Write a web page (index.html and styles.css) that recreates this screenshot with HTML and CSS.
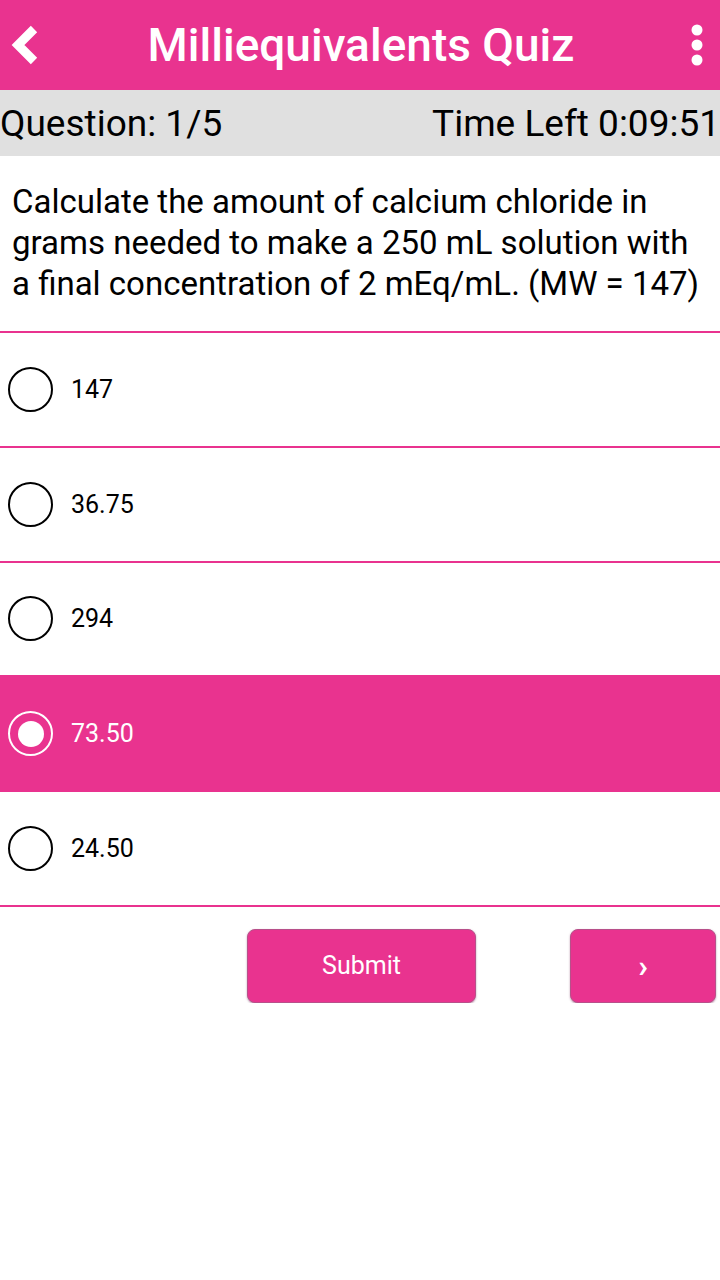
FILE: index.html
```html
<!DOCTYPE html>
<html lang="en-US">
<head>
  <title>Milliequivalents Quiz</title>
  <meta charset="utf-8">
  <link rel="stylesheet" href="styles.css">
</head>
<body>
  <header class="app-bar">
    <svg class="back" width="32" height="40" viewBox="0 0 32 40">
      <path d="M24 4 L8 20 L24 36" fill="none" stroke="#fff" stroke-width="9" stroke-linejoin="miter"/>
    </svg>
    <h1>Milliequivalents Quiz</h1>
    <svg class="menu" width="14" height="44" viewBox="0 0 14 44">
      <circle cx="7" cy="7" r="5.5" fill="#fff"/>
      <circle cx="7" cy="22" r="5.5" fill="#fff"/>
      <circle cx="7" cy="37" r="5.5" fill="#fff"/>
    </svg>
  </header>

  <div class="status">
    <span>Question: 1/5</span>
    <span>Time Left 0:09:51</span>
  </div>

  <p class="question">Calculate the amount of calcium chloride in grams needed to make a 250 mL solution with a final concentration of 2 mEq/mL. (MW = 147)</p>

  <ul class="options">
    <li><span class="radio"></span>147</li>
    <li><span class="radio"></span>36.75</li>
    <li><span class="radio"></span>294</li>
    <li class="selected"><span class="radio"></span>73.50</li>
    <li><span class="radio"></span>24.50</li>
  </ul>

  <div class="actions">
    <button class="btn submit" type="button">Submit</button>
    <button class="btn next" type="button">&#8250;</button>
  </div>
</body>
</html>
```

FILE: styles.css
```css
body {
  margin: 0;
  background-color: #fff;
  color: #000;
  font-family: Roboto, "Noto Sans", sans-serif;
}

.app-bar {
  background-color: #e9338f;
  height: 90px;
  display: flex;
  align-items: center;
  padding: 0 16px 0 10px;
}

.app-bar h1 {
  flex: 1;
  margin: 0;
  color: #fff;
  font-size: 46px;
  font-weight: 500;
  text-align: center;
  padding-right: 4px;
}

.back {
  display: block;
}

.menu {
  display: block;
  margin-left: 6px;
}

.status {
  background-color: #e0e0e0;
  height: 66px;
  display: flex;
  justify-content: space-between;
  align-items: center;
  font-size: 37px;
}

.question {
  margin: 0;
  padding: 25px 12px 27px 12px;
  font-size: 33px;
  line-height: 41px;
  border-bottom: 2px solid #e9338f;
}

.options {
  list-style: none;
  margin: 0;
  padding: 0;
}

.options li {
  height: 112.8px;
  display: flex;
  align-items: center;
  padding-left: 8px;
  font-size: 25px;
  border-bottom: 2px solid #e9338f;
}

.options li.selected {
  background-color: #e9338f;
  color: #fff;
}

.radio {
  width: 41px;
  height: 41px;
  border: 2px solid #000;
  border-radius: 50%;
  margin-right: 18px;
  box-sizing: content-box;
  display: flex;
  align-items: center;
  justify-content: center;
}

.selected .radio {
  border-color: #fff;
}

.selected .radio::after {
  content: "";
  width: 26px;
  height: 26px;
  border-radius: 50%;
  background-color: #fff;
}

.actions {
  display: flex;
  padding-top: 22px;
  padding-left: 247px;
}

.btn {
  height: 74px;
  border: 1px solid #b8508a;
  border-radius: 8px;
  background-color: #e9338f;
  color: #fff;
  font-family: Roboto, "Noto Sans", sans-serif;
  box-shadow: 0 1px 2px rgba(120, 40, 90, 0.5);
}

.submit {
  width: 229px;
  font-size: 25px;
}

.next {
  width: 146px;
  margin-left: 94px;
  font-size: 32px;
  font-weight: 700;
}
```
